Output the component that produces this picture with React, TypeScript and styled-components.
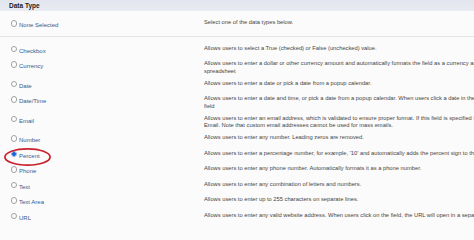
import styled, { createGlobalStyle } from "styled-components";

const GlobalStyle = createGlobalStyle`
html, body {
    margin:0;
    padding:0;
    background:#fbfbfb;
    overflow:hidden;
}
body {
    font-family:"Liberation Sans", Arial, sans-serif;
}
`

const Page = styled.div`
width:474px;
height:229px;
overflow:hidden;
background:#fbfbfb;
`
const Header = styled.div`
height:11px;
display:flex;
align-items:center;
padding-left:9px;
background:linear-gradient(#e2e5ee, #e9ebf2);
font-size:6.5px;
font-weight:bold;
color:#222;
`
const NoneSection = styled.div`
padding:5px 0 4px;
border-bottom:1px solid #e3e3e3;
`
const List = styled.div`
padding-top:5px;
`
const Row = styled.div`
position:relative;
display:grid;
grid-template-columns:204px 1fr;
padding:2px 0 1.5px;
`
const LabelCell = styled.div`
display:flex;
align-items:flex-start;
gap:2px;
height:12px;
padding-left:10.5px;
`
interface RadioProps {
    $checked?: boolean
}
const Radio = styled.span<RadioProps>`
box-sizing:border-box;
width:6.5px;
height:6.5px;
margin-top:2px;
border-radius:50%;
flex:none;
border:0.8px solid ${props => props.$checked ? "#7fa8e4" : "#a0a0a0"};
background:${props => props.$checked ? "radial-gradient(circle, #1a5fd8 0 1.8px, #d6e5fa 2.1px)" : "#fff"};
`
const LabelText = styled.span`
margin-top:4px;
font-size:6px;
line-height:7px;
color:#36598f;
white-space:nowrap;
`
const Desc = styled.div`
padding-top:1px;
font-size:5.75px;
line-height:7.5px;
color:#454545;
white-space:nowrap;
overflow:hidden;
`
const Highlight = styled.svg`
position:absolute;
left:4px;
top:1px;
width:47px;
height:18px;
overflow:visible;
pointer-events:none;
`

interface DataType {
    name: string,
    lines: string[],
    checked?: boolean
}

const types: DataType[] = [
    { name: "Checkbox", lines: ["Allows users to select a True (checked) or False (unchecked) value."] },
    { name: "Currency", lines: ["Allows users to enter a dollar or other currency amount and automatically formats the field as a currency amount. This can be useful if you export data to a", "spreadsheet"] },
    { name: "Date", lines: ["Allows users to enter a date or pick a date from a popup calendar."] },
    { name: "Date/Time", lines: ["Allows users to enter a date and time, or pick a date from a popup calendar. When users click a date in the popup, that date and the current time are entered into the Date/Time", "field"] },
    { name: "Email", lines: ["Allows users to enter an email address, which is validated to ensure proper format. If this field is specified for a contact or lead, users can choose the address when clicking Send an", "Email. Note that custom email addresses cannot be used for mass emails."] },
    { name: "Number", lines: ["Allows users to enter any number. Leading zeros are removed."] },
    { name: "Percent", lines: ["Allows users to enter a percentage number, for example, '10' and automatically adds the percent sign to the number."], checked: true },
    { name: "Phone", lines: ["Allows users to enter any phone number. Automatically formats it as a phone number."] },
    { name: "Text", lines: ["Allows users to enter any combination of letters and numbers."] },
    { name: "Text Area", lines: ["Allows users to enter up to 255 characters on separate lines."] },
    { name: "URL", lines: ["Allows users to enter any valid website address. When users click on the field, the URL will open in a separate browser window."] },
]

const TypeRow = (props: DataType) => {
    return (
        <Row>
            <LabelCell>
                <Radio $checked={props.checked} />
                <LabelText>{props.name}</LabelText>
            </LabelCell>
            <Desc>
                {props.lines.map((line, i) => <div key={i}>{line}</div>)}
            </Desc>
            {props.checked ?
                <Highlight viewBox="0 0 47 18">
                    <ellipse cx="23.5" cy="9" rx="22.6" ry="8.2" fill="none" stroke="#c9202b" strokeWidth="1.7" />
                </Highlight>
                : ""}
        </Row>
    )
}

const App = () => {
    return (
        <Page>
            <GlobalStyle />
            <Header>Data Type</Header>
            <NoneSection>
                <TypeRow name="None Selected" lines={["Select one of the data types below."]} />
            </NoneSection>
            <List>
                {types.map(t => <TypeRow key={t.name} {...t} />)}
            </List>
        </Page>
    )
}
export default App;
